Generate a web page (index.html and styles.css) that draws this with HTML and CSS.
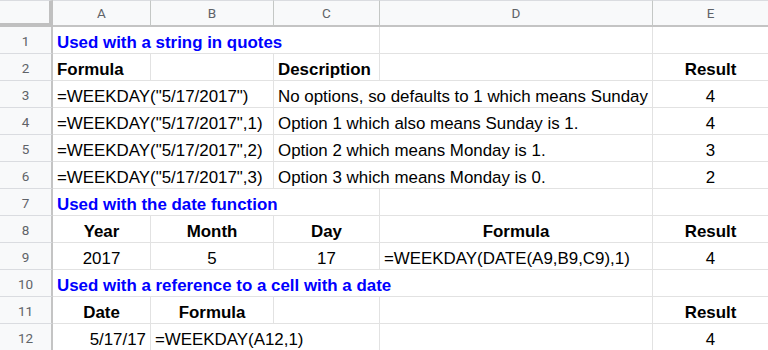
FILE: index.html
```html
<!DOCTYPE html>
<html>
<head>
<meta charset="utf-8">
<link rel="stylesheet" href="styles.css">
</head>
<body>
<div class="sheet">
  <div class="corner"></div>
  <div class="ch">A</div>
  <div class="ch">B</div>
  <div class="ch">C</div>
  <div class="ch">D</div>
  <div class="ch">E</div>

  <div class="rh">1</div>
  <div class="c title span3">Used with a string in quotes</div>
  <div class="c"></div>
  <div class="c"></div>

  <div class="rh">2</div>
  <div class="c b">Formula</div>
  <div class="c"></div>
  <div class="c b">Description</div>
  <div class="c"></div>
  <div class="c b ctr">Result</div>

  <div class="rh">3</div>
  <div class="c span2">=WEEKDAY("5/17/2017")</div>
  <div class="c span2">No options, so defaults to 1 which means Sunday</div>
  <div class="c ctr">4</div>

  <div class="rh">4</div>
  <div class="c span2">=WEEKDAY("5/17/2017",1)</div>
  <div class="c span2">Option 1 which also means Sunday is 1.</div>
  <div class="c ctr">4</div>

  <div class="rh">5</div>
  <div class="c span2">=WEEKDAY("5/17/2017",2)</div>
  <div class="c span2">Option 2 which means Monday is 1.</div>
  <div class="c ctr">3</div>

  <div class="rh">6</div>
  <div class="c span2">=WEEKDAY("5/17/2017",3)</div>
  <div class="c span2">Option 3 which means Monday is 0.</div>
  <div class="c ctr">2</div>

  <div class="rh">7</div>
  <div class="c title span3">Used with the date function</div>
  <div class="c"></div>
  <div class="c"></div>

  <div class="rh">8</div>
  <div class="c b ctr">Year</div>
  <div class="c b ctr">Month</div>
  <div class="c b ctr">Day</div>
  <div class="c b ctr">Formula</div>
  <div class="c b ctr">Result</div>

  <div class="rh">9</div>
  <div class="c ctr">2017</div>
  <div class="c ctr">5</div>
  <div class="c ctr">17</div>
  <div class="c">=WEEKDAY(DATE(A9,B9,C9),1)</div>
  <div class="c ctr">4</div>

  <div class="rh">10</div>
  <div class="c title span4">Used with a reference to a cell with a date</div>
  <div class="c"></div>

  <div class="rh">11</div>
  <div class="c b ctr">Date</div>
  <div class="c b ctr">Formula</div>
  <div class="c"></div>
  <div class="c"></div>
  <div class="c b ctr">Result</div>

  <div class="rh">12</div>
  <div class="c rt">5/17/17</div>
  <div class="c span2">=WEEKDAY(A12,1)</div>
  <div class="c"></div>
  <div class="c ctr">4</div>
</div>
</body>
</html>
```

FILE: styles.css
```css
html, body {
  margin: 0;
  padding: 0;
  background: #ffffff;
}

.sheet {
  display: grid;
  grid-template-columns: 53px 98px 123px 106px 273px 116px;
  grid-auto-rows: 27px;
  width: 769px;
  overflow: hidden;
}

.corner {
  box-sizing: border-box;
  background: #f8f9fa;
  border-right: 4px solid #c0c0c0;
  border-bottom: 4px solid #c0c0c0;
  border-top: 1px solid #dadce0;
}

.ch {
  box-sizing: border-box;
  background: #f8f9fa;
  border-right: 1px solid #c4c7c5;
  border-bottom: 2px solid #c4c4c4;
  border-top: 1px solid #dadce0;
  display: flex;
  align-items: center;
  justify-content: center;
  font-family: Roboto, "Liberation Sans", sans-serif;
  font-size: 13.5px;
  color: #5f6368;
}

.rh {
  box-sizing: border-box;
  background: #f8f9fa;
  border-right: 2px solid #c4c4c4;
  border-bottom: 1px solid #dadce0;
  display: flex;
  align-items: center;
  justify-content: center;
  font-family: Roboto, "Liberation Sans", sans-serif;
  font-size: 13.5px;
  color: #5f6368;
  padding-top: 1px;
}

.c {
  box-sizing: border-box;
  border-right: 1px solid #e2e2e2;
  border-bottom: 1px solid #e2e2e2;
  display: flex;
  align-items: flex-end;
  padding: 0 4px 1px 4px;
  white-space: nowrap;
  overflow: hidden;
  font-family: "Liberation Sans", Arial, sans-serif;
  font-size: 16.9px;
  line-height: 19px;
  color: #000000;
}

.b {
  font-weight: bold;
}

.title {
  font-weight: bold;
  color: #0000ff;
}

.ctr {
  justify-content: center;
}

.rt {
  justify-content: flex-end;
}

.span2 {
  grid-column: span 2;
}

.span3 {
  grid-column: span 3;
}

.span4 {
  grid-column: span 4;
}
```
